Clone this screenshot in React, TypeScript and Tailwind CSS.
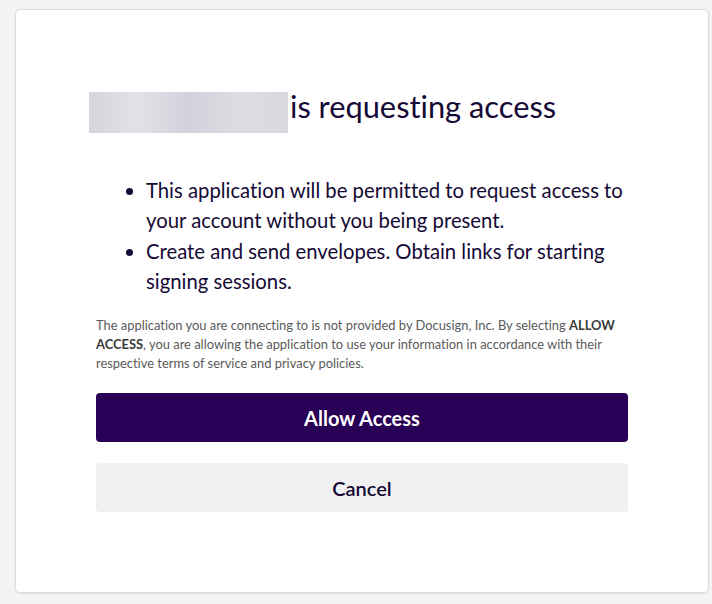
import React from "react";

export default function App() {
  return (
    <div className="h-[604px] w-[712px] bg-[#f4f4f4] pt-[9px] pl-[15px] [font-variant-ligatures:none]" style={{ fontFamily: "Lato, 'Noto Sans', sans-serif" }}>
      <div className="w-[694px] h-[584px] bg-white border border-[#dcdcdc] rounded-[5px] shadow-[0_1px_2px_rgba(0,0,0,0.08)]">
        <div className="mx-auto w-[532px] pt-[82px]">
          <div className="flex items-start -ml-[7px] h-[41px]">
            <div className="w-[199px] h-[41px] bg-[linear-gradient(90deg,#d6d5dc_0%,#e2e1e7_25%,#d3d1da_50%,#dddce2_75%,#d9d8de_100%)]" />
            <h1 className="ml-[2px] text-[30.8px] leading-none text-[#150a35] font-normal">is requesting access</h1>
          </div>
          <ul className="mt-[42px] list-disc pl-[50px] text-[20.3px] leading-[30.3px] text-[#150a35]">
            <li>This application will be permitted to request access to your account without you being present.</li>
            <li>Create and send envelopes. Obtain links for starting signing sessions.</li>
          </ul>
          <p className="mt-[20px] text-[12.9px] leading-[19px] text-[#5a5a5a]">
            The application you are connecting to is not provided by Docusign, Inc. By selecting <b className="font-bold text-[#3a3a3a]">ALLOW ACCESS</b>, you are allowing the application to use your information in accordance with their respective terms of service and privacy policies.
          </p>
          <button className="mt-[20px] flex h-[49px] w-full items-center justify-center rounded-[4px] bg-[#290056] text-[20px] font-bold text-white">
            Allow Access
          </button>
          <button className="mt-[21px] flex h-[49px] w-full items-center justify-center rounded-[4px] bg-[#f1f1f3] text-[20px] font-semibold text-[#150a35]">
            Cancel
          </button>
        </div>
      </div>
    </div>
  );
}
